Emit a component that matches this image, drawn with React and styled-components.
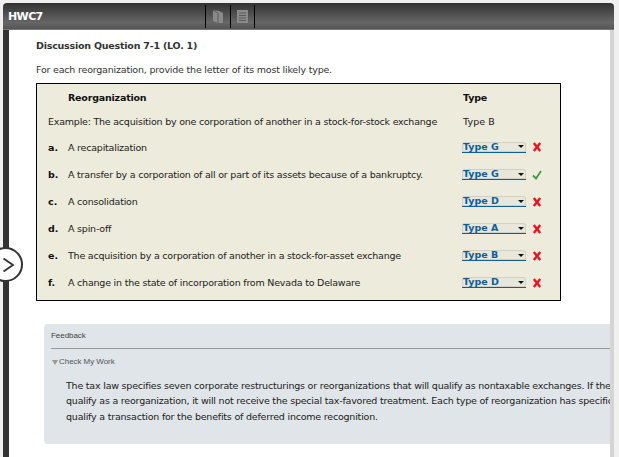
import React from "react";
import styled, { createGlobalStyle } from "styled-components";

const Global = createGlobalStyle`
  html, body { margin: 0; padding: 0; width: 619px; height: 457px; overflow: hidden; background: #f0f0f0; }
  body { font-family: "DejaVu Sans", Verdana, sans-serif; }
`;
const Page = styled.div`
  position: relative; width: 619px; height: 457px; padding: 3px 5px 0 3px; box-sizing: border-box; overflow: hidden;
`;
const Header = styled.header`
  height: 27px; display: flex; align-items: stretch; border-radius: 4px 4px 0 0;
  background: linear-gradient(#333 0%, #4a4a4a 35%, #666 75%, #555 100%);
  border-bottom: 1px solid #777; box-sizing: border-box;
`;
const Title = styled.div`
  width: 202px; box-sizing: border-box; padding: 1px 0 0 5px; font: bold 11px/25px "DejaVu Sans", sans-serif; color: #fff; letter-spacing: -0.6px;
`;
const Tool = styled.div`
  width: 24.5px; margin-top: 2px; height: 23px; box-sizing: border-box; border-left: 1px solid #000; display: flex; align-items: center; justify-content: center;
  &:last-child { width: 0; }
`;
const Body = styled.div`
  height: 427px; background: #fff; border-left: 6px solid #333; border-right: 4px solid #d4d4d4; overflow: hidden;
`;
const Content = styled.div`
  padding: 10px 0 0 27px; color: #333;
`;
const Heading = styled.div`
  font-size: 9.5px; font-weight: bold; line-height: 12px; letter-spacing: -0.22px;
`;
const Intro = styled.div`
  font-size: 9.5px; line-height: 12px; margin-top: 12px; letter-spacing: -0.2px;
`;
const Panel = styled.div`
  width: 525px; height: 218px; box-sizing: border-box; margin-top: 7px; background: #edebdb; border: 1px solid #000; color: #222; font-size: 9.5px;
  display: flex; flex-direction: column; padding: 0 0 0 11px;
`;
const Row = styled.div`
  height: ${p => p.$h}px; display: grid; grid-template-columns: 20px 395px 70px 20px; align-items: center; white-space: nowrap;
`;
const Letter = styled.b`font-size: 9.5px; color: #111;`;
const HeadCell = styled.b`font-size: 9.5px; color: #111; letter-spacing: -0.2px;`;
const ExampleCell = styled.span`grid-column: 1 / span 2; letter-spacing: -0.22px;`;
const TextCell = styled.span`letter-spacing: -0.21px;`;
const TypeCell = styled.span`letter-spacing: 0.1px;`;
const Select = styled.div`
  width: 64px; height: 11px; box-sizing: border-box; border-bottom: 1px solid #0a5f9e; border-radius: 3px 3px 0 0;
  background: #e9e7d9; box-shadow: inset 0 0 0 1px #d2d0c4; color: #0a5f9e; font: bold 9.5px/10px "DejaVu Sans", sans-serif;
  display: flex; justify-content: space-between; align-items: center; padding-left: 1px; margin-left: -1px;
  &::after { content: ""; border: 3px solid transparent; border-top-color: #111; border-bottom: 0; margin-right: 2px; }
`;
const Mark = styled.svg`width: 10px; height: 10px; margin-left: -1px;`;
const Feedback = styled.section`
  margin: 23px 0 0 8px; height: 120px; background: #dfe5e8; border-radius: 4px 0 0 4px; overflow: hidden;
`;
const FbTitle = styled.div`
  height: 25px; margin: 0 0 0 7px; border-bottom: 1px solid #999; font: 8px/23px "Liberation Sans", Arial, sans-serif; color: #444; box-sizing: border-box; letter-spacing: -0.05px;
`;
const Check = styled.div`
  margin: 7px 0 0 8px; font: 8px/12px "Liberation Sans", Arial, sans-serif; color: #555; display: flex; align-items: center; gap: 1px; letter-spacing: -0.05px;
  &::before { content: ""; border: 3px solid transparent; border-top: 5px solid #999; border-bottom: 0; }
`;
const FbText = styled.p`
  margin: 10px 0 0 22px; font-size: 9.5px; line-height: 15.4px; color: #222; white-space: nowrap; letter-spacing: -0.21px;
`;
const Arrow = styled.div`
  position: absolute; left: -12px; top: 247px; width: 35px; height: 35px; box-sizing: border-box; border: 2px solid #333; border-radius: 50%; background: #fff;
  display: flex; align-items: center; justify-content: center;
`;

const BookIcon = () => (
  <svg width="12" height="15" viewBox="0 0 12 15"><path d="M1 1 L7 2 L11 4 V14 H6 L1 12 Z" fill="#8a8a8a"/><path d="M1 1 L6 4 V14" stroke="#5a5a5a" fill="none"/></svg>
);
const PageIcon = () => (
  <svg width="11" height="13" viewBox="0 0 11 13"><rect width="11" height="13" fill="#8a8a8a"/><path d="M2 3H9M2 5.5H9M2 8H9M2 10.5H9" stroke="#5a5a5a"/></svg>
);
const X = () => (
  <Mark viewBox="0 0 10 10"><path d="M1.8 1 L8.2 9 M8.2 1 L1.8 9" stroke="#f01020" strokeWidth="2.4"/></Mark>
);
const Tick = () => (
  <Mark viewBox="0 0 10 10"><path d="M1 5.5 L4 8.5 L9 1" stroke="#3f9a40" strokeWidth="1.8" fill="none"/></Mark>
);

const rows = [
  ["a.", "A recapitalization", "Type G", false, 28],
  ["b.", "A transfer by a corporation of all or part of its assets because of a bankruptcy.", "Type G", true, 27],
  ["c.", "A consolidation", "Type D", false, 27],
  ["d.", "A spin-off", "Type A", false, 27],
  ["e.", "The acquisition by a corporation of another in a stock-for-asset exchange", "Type B", false, 27],
  ["f.", "A change in the state of incorporation from Nevada to Delaware", "Type D", false, 27],
];

export default function App() {
  return (
    <Page>
      <Global />
      <Header>
        <Title>HWC7</Title>
        <Tool><BookIcon /></Tool>
        <Tool><PageIcon /></Tool>
        <Tool />
      </Header>
      <Body>
        <Content>
          <Heading>Discussion Question 7-1 (LO. 1)</Heading>
          <Intro>For each reorganization, provide the letter of its most likely type.</Intro>
          <Panel>
            <Row $h={26}><span /><HeadCell>Reorganization</HeadCell><HeadCell>Type</HeadCell></Row>
            <Row $h={23}><ExampleCell>Example: The acquisition by one corporation of another in a stock-for-stock exchange</ExampleCell><TypeCell>Type B</TypeCell></Row>
            {rows.map(([l, t, v, ok, h]) => (
              <Row key={l} $h={h}>
                <Letter>{l}</Letter>
                <TextCell>{t}</TextCell>
                <Select>{v}</Select>
                {ok ? <Tick /> : <X />}
              </Row>
            ))}
          </Panel>
          <Feedback>
            <FbTitle>Feedback</FbTitle>
            <Check>Check My Work</Check>
            <FbText>
              The tax law specifies seven corporate restructurings or reorganizations that will qualify as nontaxable exchanges. If the<br />
              qualify as a reorganization, it will not receive the special tax-favored treatment. Each type of reorganization has specific<br />
              qualify a transaction for the benefits of deferred income recognition.
            </FbText>
          </Feedback>
        </Content>
      </Body>
      <Arrow>
        <svg width="13" height="16" viewBox="0 0 13 16" style={{marginLeft: 5}}><path d="M1.5 1.5 L11 8 L1.5 14.5" stroke="#333" strokeWidth="1.8" fill="none"/></svg>
      </Arrow>
    </Page>
  );
}
